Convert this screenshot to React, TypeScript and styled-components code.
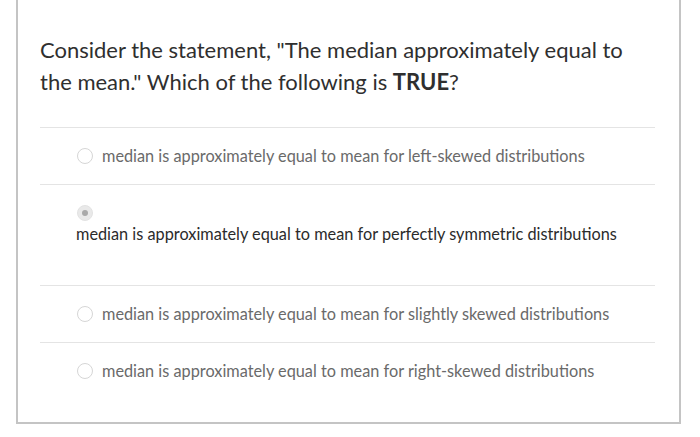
import React from "react";
import styled, { createGlobalStyle } from "styled-components";

const Global = createGlobalStyle`
  html, body { margin: 0; padding: 0; background: #ffffff; }
  body { font-family: Lato, "Open Sans", sans-serif; }
`;

const Card = styled.div`
  margin: 0 19px 0 16px;
  border-style: solid;
  border-color: #c4c4c4;
  border-width: 0 2px 2px 2px;
  padding: 34px 24px 23px 22px;
  background: #fff;
`;

const Question = styled.div`
  font-size: 22px;
  line-height: 32px;
  color: #2f2f2f;
  margin-bottom: 29px;
  b { font-weight: 700; }
`;

const Row = styled.div<{ $stacked?: boolean }>`
  border-top: 1px solid #e4e4e4;
  display: flex;
  flex-direction: ${(p) => (p.$stacked ? "column" : "row")};
  align-items: ${(p) => (p.$stacked ? "flex-start" : "center")};
  gap: ${(p) => (p.$stacked ? "3px" : "9px")};
  padding: ${(p) => (p.$stacked ? "20px 0 41px 36px" : "18px 0 18px 37px")};
`;

const Radio = styled.span<{ $checked?: boolean }>`
  box-sizing: border-box;
  width: 16px;
  height: 16px;
  border-radius: 50%;
  flex: none;
  display: flex;
  align-items: center;
  justify-content: center;
  background: ${(p) => (p.$checked ? "#e9e9e9" : "#fff")};
  border: 1px solid ${(p) => (p.$checked ? "#e3e3e3" : "#d6d6d6")};
  margin-left: ${(p) => (p.$checked ? "1px" : "0")};
  &::after {
    content: "";
    display: ${(p) => (p.$checked ? "block" : "none")};
    width: 6px;
    height: 6px;
    border-radius: 50%;
    background: #a9a9a9;
  }
`;

const Label = styled.span<{ $checked?: boolean }>`
  font-size: 16.3px;
  line-height: 20px;
  color: ${(p) => (p.$checked ? "#2b2b2b" : "#6a6a6a")};
`;

const options = [
  { text: "median is approximately equal to mean for left-skewed distributions", checked: false },
  { text: "median is approximately equal to mean for perfectly symmetric distributions", checked: true },
  { text: "median is approximately equal to mean for slightly skewed distributions", checked: false },
  { text: "median is approximately equal to mean for right-skewed distributions", checked: false },
];

export default function App() {
  return (
    <>
      <Global />
      <Card>
        <Question>
          Consider the statement, "The median approximately equal to the mean." Which of the following is <b>TRUE</b>?
        </Question>
        {options.map((o) => (
          <Row key={o.text} $stacked={o.checked}>
            <Radio $checked={o.checked} />
            <Label $checked={o.checked}>{o.text}</Label>
          </Row>
        ))}
      </Card>
    </>
  );
}
